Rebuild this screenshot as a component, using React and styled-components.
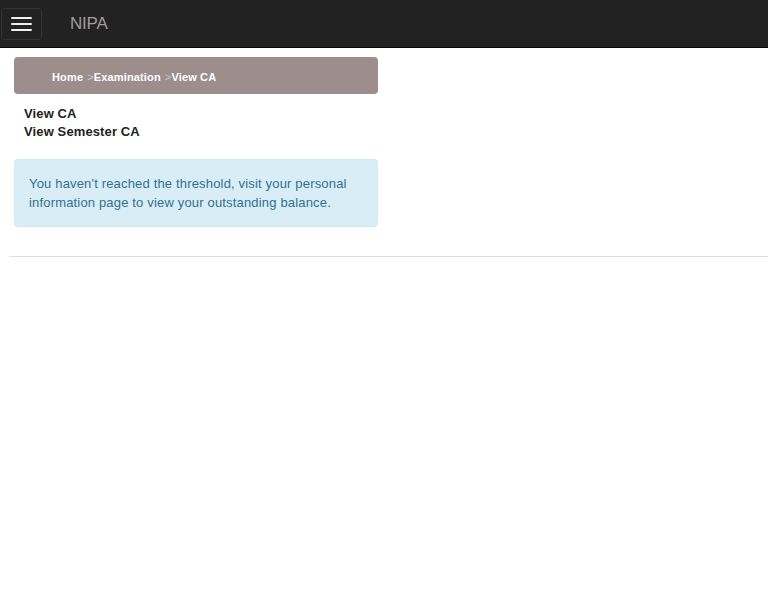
import React from "react";
import styled, { createGlobalStyle } from "styled-components";

const Global = createGlobalStyle`
  html, body { margin: 0; padding: 0; background: #fff; }
  body { font-family: "Liberation Sans", Arial, sans-serif; font-size: 13px; color: #333; }
  * { box-sizing: border-box; }
`;

const Navbar = styled.header`
  height: 48px;
  background: #222;
  border-bottom: 1px solid #080808;
  display: flex;
  align-items: center;
`;

const Toggle = styled.button`
  width: 41px;
  height: 32px;
  margin-left: 1px;
  background: transparent;
  border: 1px solid #333;
  border-radius: 4px;
  display: flex;
  flex-direction: column;
  align-items: center;
  justify-content: center;
  gap: 4px;
  padding: 0;
`;

const Bar = styled.span`
  display: block;
  width: 21px;
  height: 2px;
  background: #eee;
  border-radius: 1px;
`;

const Brand = styled.span`
  margin-left: 28px;
  font-size: 17px;
  color: #9d9d9d;
  letter-spacing: -0.2px;
`;

const Content = styled.main`
  padding: 9px 0 0 14px;
  width: 378px;
`;

const Breadcrumb = styled.nav`
  height: 37px;
  background: #9d8d8d;
  border-radius: 4px;
  display: flex;
  align-items: center;
  padding: 3px 0 0 38px;
  font-size: 11px;
  font-weight: bold;
  letter-spacing: 0.15px;
  color: #fff;
`;

const Sep = styled.span`
  color: #ccc;
  font-weight: normal;
  margin-left: 4px;
`;

const Links = styled.div`
  padding: 11px 0 0 10px;
  display: flex;
  flex-direction: column;
  font-size: 13px;
  font-weight: bold;
  line-height: 18px;
  letter-spacing: 0.12px;
  color: #222;
`;

const Alert = styled.div`
  margin-top: 18px;
  background: #d9edf7;
  border: 1px solid #cfe8f2;
  border-radius: 4px;
  padding: 14px 10px 14px 14px;
  color: #31708f;
  font-size: 13px;
  line-height: 19px;
  letter-spacing: 0.17px;
  height: 68px;
`;

const Rule = styled.hr`
  margin: 29px 0 0 9px;
  border: 0;
  border-top: 1px solid #ddd;
`;

export default function App() {
  return (
    <>
      <Global />
      <Navbar>
        <Toggle aria-label="menu">
          <Bar />
          <Bar />
          <Bar />
        </Toggle>
        <Brand>NIPA</Brand>
      </Navbar>
      <Content>
        <Breadcrumb>
          Home<Sep>&gt;</Sep>Examination<Sep>&gt;</Sep>View CA
        </Breadcrumb>
        <Links>
          <span>View CA</span>
          <span>View Semester CA</span>
        </Links>
        <Alert>
          You haven't reached the threshold, visit your personal information page to view your outstanding balance.
        </Alert>
      </Content>
      <Rule />
    </>
  );
}
